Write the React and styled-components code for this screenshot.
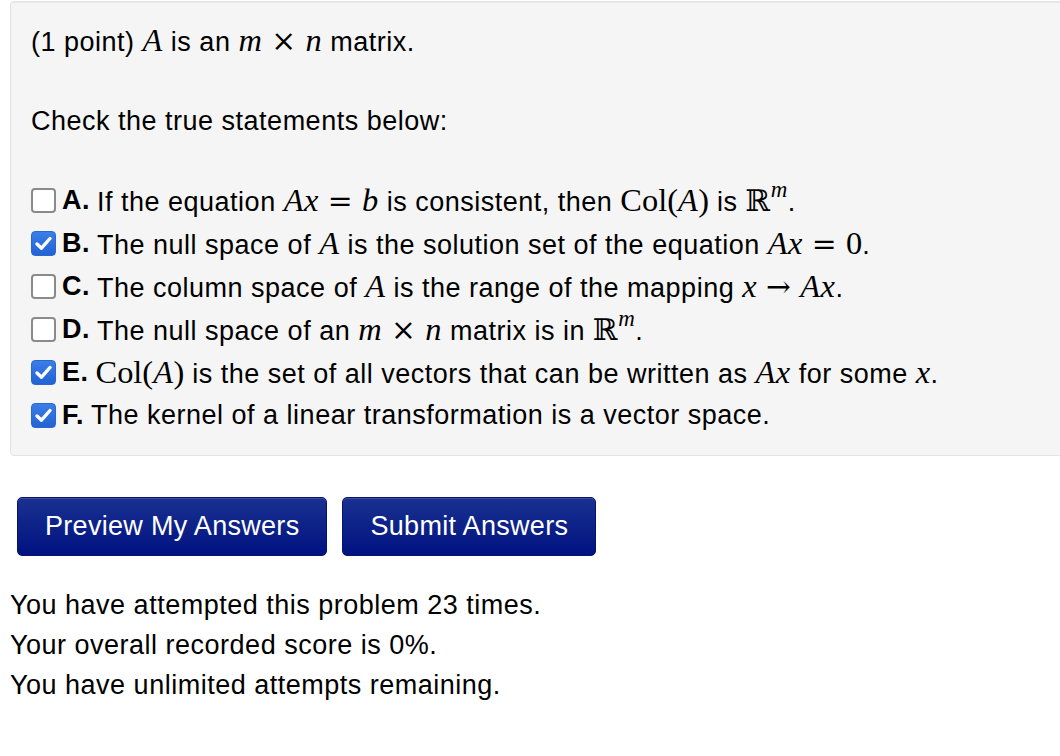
import React from 'react';
import styled, { createGlobalStyle } from 'styled-components';

const GlobalStyle = createGlobalStyle`
  html, body {
    margin: 0;
    padding: 0;
    background: #fff;
    overflow: hidden;
  }
  body {
    font-family: "Liberation Sans", Arial, sans-serif;
    color: #000;
  }
`;

const Page = styled.div`
  width: 1100px;
  padding-top: 1px;
`;

const ProblemBox = styled.div`
  margin-left: 10px;
  padding: 19px 20px 18px 20px;
  background: #f5f5f5;
  border: 1px solid #e3e3e3;
  border-radius: 4px;
  box-shadow: inset 0 1px 1px rgba(0, 0, 0, 0.05);
  font-size: 27px;
  letter-spacing: 0.5px;
`;

const Line = styled.div`
  line-height: 42px;
  margin-bottom: ${(p) => p.$gap || 0}px;
`;

const Choices = styled.div`
  display: flex;
  flex-direction: column;
`;

const Choice = styled.label`
  display: flex;
  align-items: center;
  height: 43px;
  white-space: nowrap;
`;

const Box = styled.span`
  flex: none;
  width: 25px;
  height: 25px;
  box-sizing: border-box;
  border-radius: 4px;
  margin-right: 6px;
  display: flex;
  align-items: center;
  justify-content: center;
  background: ${(p) => (p.$checked ? 'linear-gradient(#3a7ee8, #2262d4)' : '#fff')};
  border: ${(p) => (p.$checked ? '1px solid #2a68cf' : '2px solid #8a8a8a')};
`;

const Letter = styled.b`
  margin-right: 7px;
`;

const V = styled.span`
  font-family: "Liberation Serif", "Times New Roman", serif;
  font-style: italic;
  font-size: 1.2em;
  line-height: 1;
  letter-spacing: 0.5px;
`;

const R = styled.span`
  font-family: "Liberation Serif", "Times New Roman", serif;
  font-size: 1.2em;
  line-height: 1;
  letter-spacing: 0;
`;

const Op = styled.span`
  font-family: "DejaVu Serif", "Liberation Serif", serif;
  font-size: 1.1em;
  line-height: 1;
  margin: 0 0.3em;
`;

const Bb = styled.span`
  font-family: "DejaVu Serif", serif;
  font-size: 1.1em;
  line-height: 1;
`;

const Sup = styled.sup`
  font-family: "Liberation Serif", "Times New Roman", serif;
  font-style: italic;
  font-size: 0.85em;
  line-height: 0;
  vertical-align: 0.6em;
`;

const Actions = styled.div`
  display: flex;
  gap: 15px;
  margin: 41px 0 29px 17px;
`;

const Button = styled.button`
  height: 59px;
  padding: 0 27px;
  border: 1px solid #06156a;
  border-radius: 5px;
  background: linear-gradient(#1a3190, #001281);
  color: #fff;
  font-family: "Liberation Sans", Arial, sans-serif;
  font-size: 27px;
  letter-spacing: 0.3px;
  cursor: pointer;
  box-shadow: inset 0 1px 0 rgba(255, 255, 255, 0.15);
`;

const Status = styled.div`
  margin-left: 10px;
  font-size: 27px;
  letter-spacing: 0.5px;
  line-height: 40px;
`;

const Check = () => (
  <svg width="19" height="17" viewBox="0 0 19 17">
    <path d="M3 9 L7.5 13.2 L16 3.5" fill="none" stroke="#fff" strokeWidth="3.4" strokeLinecap="round" strokeLinejoin="round" />
  </svg>
);

const Option = ({ letter, checked, children }) => (
  <Choice>
    <Box $checked={checked}>{checked && <Check />}</Box>
    <Letter>{letter}.</Letter>
    <span>{children}</span>
  </Choice>
);

const Col = () => (
  <R>
    Col(<V style={{ fontSize: '1em' }}>A</V>)
  </R>
);

export default function App() {
  return (
    <Page>
      <GlobalStyle />
      <ProblemBox>
        <Line $gap={37}>
          (1 point) <V>A</V> is an <V>m</V>
          <Op>×</Op>
          <V>n</V> matrix.
        </Line>
        <Line $gap={37}>Check the true statements below:</Line>
        <Choices>
          <Option letter="A">
            If the equation <V>Ax</V>
            <Op>=</Op>
            <V>b</V> is consistent, then <Col /> is <Bb>ℝ</Bb>
            <Sup>m</Sup>.
          </Option>
          <Option letter="B" checked>
            The null space of <V>A</V> is the solution set of the equation <V>Ax</V>
            <Op>=</Op>
            <R>0</R>.
          </Option>
          <Option letter="C">
            The column space of <V>A</V> is the range of the mapping <V>x</V>
            <Op>→</Op>
            <V>Ax</V>.
          </Option>
          <Option letter="D">
            The null space of an <V>m</V>
            <Op>×</Op>
            <V>n</V> matrix is in <Bb>ℝ</Bb>
            <Sup>m</Sup>.
          </Option>
          <Option letter="E" checked>
            <Col /> is the set of all vectors that can be written as <V>Ax</V> for some <V>x</V>.
          </Option>
          <Option letter="F" checked>
            The kernel of a linear transformation is a vector space.
          </Option>
        </Choices>
      </ProblemBox>
      <Actions>
        <Button>Preview My Answers</Button>
        <Button>Submit Answers</Button>
      </Actions>
      <Status>
        <div>You have attempted this problem 23 times.</div>
        <div>Your overall recorded score is 0%.</div>
        <div>You have unlimited attempts remaining.</div>
      </Status>
    </Page>
  );
}
